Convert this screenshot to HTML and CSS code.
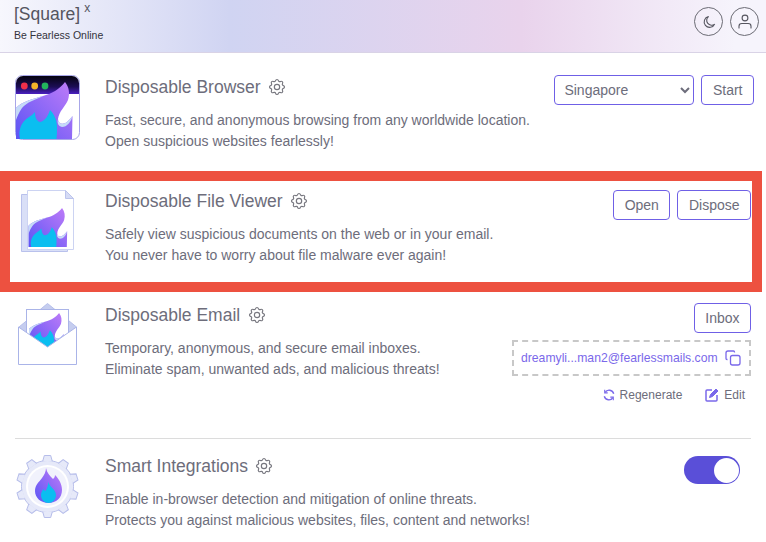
FILE: index.html
```html
<!DOCTYPE html>
<html lang="en">
<head>
<meta charset="utf-8">
<title>Square X</title>
<link rel="stylesheet" href="styles.css">
</head>
<body>
<svg class="defs" width="0" height="0" aria-hidden="true">
  <defs>
    <linearGradient id="flameP" x1="0" y1="1" x2="1" y2="0"><stop offset="0" stop-color="#5b55f5"/><stop offset="1" stop-color="#c07cf8"/></linearGradient>
    <linearGradient id="barG" x1="0" y1="0" x2="0" y2="1"><stop offset="0" stop-color="#05030f"/><stop offset=".6" stop-color="#1c0d55"/><stop offset="1" stop-color="#4a1fc0"/></linearGradient>
    <symbol id="gear" viewBox="0 0 24 24"><path fill="none" stroke="currentColor" stroke-width="1.400" stroke-linejoin="round" d="M10.325 4.317c.426-1.756 2.924-1.756 3.35 0a1.724 1.724 0 0 0 2.573 1.066c1.543-.94 3.31.826 2.37 2.37a1.724 1.724 0 0 0 1.065 2.572c1.756.426 1.756 2.924 0 3.35a1.724 1.724 0 0 0-1.066 2.573c.94 1.543-.826 3.31-2.37 2.37a1.724 1.724 0 0 0-2.572 1.065c-.426 1.756-2.924 1.756-3.35 0a1.724 1.724 0 0 0-2.573-1.066c-1.543.94-3.31-.826-2.37-2.37a1.724 1.724 0 0 0-1.065-2.572c-1.756-.426-1.756-2.924 0-3.35a1.724 1.724 0 0 0 1.066-2.573c-.94-1.543.826-3.31 2.37-2.37c1 .608 2.296.07 2.572-1.065z"/><circle cx="12" cy="12" r="3.200" fill="none" stroke="currentColor" stroke-width="1.400"/></symbol>
    <symbol id="flame" viewBox="1 7 57 57">
      <path d="M1 33C8 26 18 24 28 21C36 19 45 14 50 7C54 12 55 18 53 25C50 32 44 36 43 44C43 49 48 50 52 47C54 45 56 43 57.500 41L57 64H1Z" fill="url(#flameP)"/>
      <path d="M1 33C8 26 18 24 28 21C20 25 12 27 7 33C4 37 2 42 1 45Z" fill="#c5daf8"/>
      <path d="M43 44C43 49 48 50 52 47C54 45 56 43 57.500 41C56 47 52 52 47 52C43 51 42 48 43 44Z" fill="#c5daf8"/>
      <path d="M5 64C3 55 6 47 14 42C16 41 18 39 20 37C20 41 21 46 25 47C30 46 33 41 35 35C39 39 42 45 42 52C42 56 42 60 41.500 64Z" fill="#0bbef0"/>
    </symbol>
    <path id="tooth" d="M27.500 8L29.300 1.500H35.700L37.500 8Z" fill="#e6e9f9" stroke="#b6bdea"/>
  </defs>
</svg>

<header class="topbar">
  <div class="brand">
    <div class="brand-name">[Square]<sup class="brand-x">x</sup></div>
    <div class="brand-tag">Be Fearless Online</div>
  </div>
  <div class="top-actions">
    <button class="round-btn" aria-label="Theme"><svg width="14" height="14" viewBox="0 0 14 14"><path fill="none" stroke="#55555f" stroke-width="1.100" d="M6.500 1.500a5.500 5.500 0 1 0 6.200 7.600 4.700 4.700 0 0 1-6.200-7.600z"/></svg></button>
    <button class="round-btn" aria-label="Account"><svg width="16" height="16" viewBox="0 0 16 16"><circle cx="8" cy="4" r="2.900" fill="none" stroke="#55555f" stroke-width="1.100"/><path fill="none" stroke="#55555f" stroke-width="1.100" stroke-linecap="round" d="M2 14v-1.800c0-1.600 1.300-2.700 2.800-2.700h6.400c1.500 0 2.800 1.100 2.800 2.700V14"/></svg></button>
  </div>
</header>

<main>
  <section class="row row-browser">
    <svg class="ico" width="65" height="65" viewBox="0 0 65 65">
      <rect x=".5" y=".5" width="64" height="64" rx="7" fill="#fff" stroke="#a8a6e8"/>
      <path d="M1 8a7 7 0 0 1 7-7h49a7 7 0 0 1 7 7v11H1z" fill="url(#barG)"/>
      <use href="#flame" x="1" y="7" width="57" height="57"/>
      <circle cx="9.300" cy="11" r="3.400" fill="#f0304a"/><circle cx="19.700" cy="11" r="3.400" fill="#f4b428"/><circle cx="30" cy="11" r="3.400" fill="#23b45c"/>
    </svg>
    <div class="info">
      <h2 class="title">Disposable Browser <svg class="gear"><use href="#gear"/></svg></h2>
      <p class="desc">Fast, secure, and anonymous browsing from any worldwide location.<br>Open suspicious websites fearlessly!</p>
    </div>
    <div class="actions">
      <div class="btn-row">
        <select class="select"><option>Singapore</option></select>
        <button class="btn">Start</button>
      </div>
    </div>
  </section>

  <section class="row row-file">
    <svg class="ico" width="53" height="62" viewBox="0 0 53 62">
      <path d="M.5 4.500h6v55h40v2H.5z" fill="#d9dff7" stroke="#b9c1ec"/>
      <path d="M6.500 .5h38l8 8v51h-46z" fill="#fff" stroke="#ccd3f2"/>
      <path d="M44.500 .5v8h8z" fill="#d5dbf5" stroke="#bcc4ec"/>
      <use href="#flame" x="7" y="18" width="40" height="39"/>
    </svg>
    <div class="info">
      <h2 class="title">Disposable File Viewer <svg class="gear"><use href="#gear"/></svg></h2>
      <p class="desc">Safely view suspicious documents on the web or in your email.<br>You never have to worry about file malware ever again!</p>
    </div>
    <div class="actions">
      <div class="btn-row">
        <button class="btn">Open</button>
        <button class="btn">Dispose</button>
      </div>
    </div>
  </section>

  <section class="row row-email">
    <svg class="ico" width="60" height="62" viewBox="0 0 60 62">
      <path d="M29.500 .5L58.500 24V44H1V24z" fill="#c5cdef" stroke="#b6bfea"/>
      <rect x="8.500" y="6.500" width="42" height="40" fill="#fff" stroke="#aab4e8"/>
      <use href="#flame" x="11" y="10" width="35" height="35"/>
      <path d="M.5 24L29.500 44L58.500 24V61.500H.5z" fill="#fff" stroke="#aab4e8"/>
    </svg>
    <div class="info">
      <h2 class="title">Disposable Email <svg class="gear"><use href="#gear"/></svg></h2>
      <p class="desc">Temporary, anonymous, and secure email inboxes.<br>Eliminate spam, unwanted ads, and malicious threats!</p>
    </div>
    <div class="actions">
      <div class="btn-row"><button class="btn">Inbox</button></div>
      <div class="email-box">
        <span class="email">dreamyli...man2@fearlessmails.com</span>
        <svg width="16" height="16" viewBox="0 0 16 16" fill="none" stroke="#7a68ea" stroke-width="1.300"><rect x="5.500" y="5.500" width="9.500" height="9.500" rx="2"/><path d="M9.500 2.500V2a1 1 0 0 0-1-1H3a2 2 0 0 0-2 2v5.500a1 1 0 0 0 1 1h.5"/></svg>
      </div>
      <div class="links">
        <a class="link"><svg width="12" height="12" viewBox="0 0 14 14" fill="none" stroke="#7a68ea" stroke-width="1.600"><path d="M12.500 5.500A5.500 5.500 0 0 0 2.500 4M1.500 8.500A5.500 5.500 0 0 0 11.500 10"/><path d="M2 1v3.500h3.500M12 13V9.500H8.500" stroke-width="1.300"/></svg>Regenerate</a>
        <a class="link"><svg width="14" height="14" viewBox="0 0 14 14" fill="none" stroke="#7a68ea" stroke-width="1.500"><path d="M7 2H2a1 1 0 0 0-1 1v9a1 1 0 0 0 1 1h9a1 1 0 0 0 1-1V7"/><path d="M4.500 9.500l1-3L11 1l2 2-5.500 5.500z" fill="#7a68ea" stroke-width="1"/></svg>Edit</a>
      </div>
    </div>
  </section>

  <section class="row row-smart">
    <svg class="ico" width="65" height="65" viewBox="0 0 65 65">
      <circle cx="32.500" cy="32.500" r="26" fill="#e6e9f9" stroke="#b6bdea"/>
      <use href="#tooth"/>
      <use href="#tooth" transform="rotate(36 32.500 32.500)"/>
      <use href="#tooth" transform="rotate(72 32.500 32.500)"/>
      <use href="#tooth" transform="rotate(108 32.500 32.500)"/>
      <use href="#tooth" transform="rotate(144 32.500 32.500)"/>
      <use href="#tooth" transform="rotate(180 32.500 32.500)"/>
      <use href="#tooth" transform="rotate(216 32.500 32.500)"/>
      <use href="#tooth" transform="rotate(252 32.500 32.500)"/>
      <use href="#tooth" transform="rotate(288 32.500 32.500)"/>
      <use href="#tooth" transform="rotate(324 32.500 32.500)"/>
      <circle cx="32.500" cy="32.500" r="25.500" fill="#e6e9f9"/>
      <circle cx="32.500" cy="32.500" r="21.500" fill="#fff"/>
      <circle cx="32.500" cy="32.500" r="19.500" fill="#f1f2fc"/>
      <path d="M31 14C32 19 35 22 38 25C39 24 40 23 40 21C44 25 47 30 47 36C47 44 41 49 33.500 49C26 49 20 44 20 37C20 31 24 28 27 24C29 21 31 18 31 14Z" fill="url(#flameP)"/>
      <path d="M33.500 28C34 33 41 35 41 41C41 46 37 49 33.500 49C30 49 26 46 26 41C26 39 27 37 28.500 35C29 36 30 37 30.500 37C32 35 33 31 33.500 28Z" fill="#0bbef0"/>
    </svg>
    <div class="info">
      <h2 class="title">Smart Integrations <svg class="gear"><use href="#gear"/></svg></h2>
      <p class="desc">Enable in-browser detection and mitigation of online threats.<br>Protects you against malicious websites, files, content and networks!</p>
    </div>
    <div class="actions">
      <div class="toggle"><span class="knob"></span></div>
    </div>
  </section>
</main>
</body>
</html>
```
FILE: styles.css
```css
* { box-sizing: border-box; }
html, body { margin: 0; padding: 0; }
body {
  width: 766px;
  height: 542px;
  overflow: hidden;
  background: #fff;
  font-family: "Liberation Sans", Arial, sans-serif;
  color: #6b6b78;
}
.defs { position: absolute; }

.topbar {
  height: 53px;
  display: flex;
  justify-content: space-between;
  align-items: flex-start;
  padding: 0 7px 0 14px;
  border-bottom: 1px solid #d9d3e6;
  background: linear-gradient(90deg, #f7f7fd 0%, #d0d4f2 30%, #e9d3ec 68%, #f6f4fc 96%);
}
.brand { padding-top: 4px; }
.brand-name { font-size: 17.500px; line-height: 20px; color: #55555f; }
.brand-x { font-size: 12px; line-height: 0; margin-left: 4px; vertical-align: 8px; }
.brand-tag { font-size: 10.500px; line-height: 14px; margin-top: 4px; color: #33333c; }
.top-actions { display: flex; gap: 7px; margin-top: 7px; }
.round-btn {
  width: 29px;
  height: 29px;
  border: 1px solid #6b6b74;
  border-radius: 50%;
  background: transparent;
  padding: 0;
  display: flex;
  align-items: center;
  justify-content: center;
}

.row { display: flex; align-items: flex-start; }
.ico { flex: none; display: block; }
.info { flex: 1; min-width: 0; }
.title {
  display: flex;
  align-items: center;
  gap: 6.500px;
  margin: 0;
  font-size: 17.500px;
  font-weight: 400;
  line-height: 22px;
  color: #6d6d7b;
}
.gear { width: 20px; height: 20px; color: #77777f; }
.desc { margin: 11.500px 0 0; font-size: 14px; line-height: 21.500px; color: #6d6d7b; }
.actions { flex: none; display: flex; flex-direction: column; align-items: flex-end; }
.btn-row { display: flex; gap: 7px; }
.btn {
  height: 30px;
  padding: 0 10.500px;
  border: 1px solid #6f60e6;
  border-radius: 4px;
  background: #fff;
  font: 14px "Liberation Sans", Arial, sans-serif;
  color: #6d6d7b;
}
.select {
  width: 140px;
  height: 30px;
  padding: 0 5px;
  border: 1px solid #6f60e6;
  border-radius: 4px;
  background: #fff;
  font: 14px "Liberation Sans", Arial, sans-serif;
  color: #6d6d7b;
}

.row-browser { height: 118px; padding: 22px 12px 0 15px; }
.row-browser .info { padding: 1px 0 0 25px; }

.row-file { height: 121px; margin-right: 4px; border: 10px solid #ed5140; padding: 9px 1px 0 11px; }
.row-file .info { padding: 0 0 0 31px; }

.row-email { height: 147px; padding: 11px 15px 0 18px; position: relative; }
.row-email::after {
  content: "";
  position: absolute;
  left: 15px;
  right: 15px;
  bottom: 0;
  border-bottom: 1px solid #dcdcdc;
}
.row-email .info { padding: 1px 0 0 27px; }
.email-box {
  display: flex;
  align-items: center;
  justify-content: space-between;
  width: 239px;
  height: 36px;
  margin-top: 7px;
  padding: 0 8px 0 7px;
  border: 2px dashed #c8c8c8;
}
.email { font-size: 12.200px; color: #7a68ea; }
.links { display: flex; gap: 23px; margin-top: 12px; padding-right: 6px; }
.link { display: flex; align-items: center; gap: 5px; font-size: 12px; color: #6d6d7b; }

.row-smart { padding: 15px 26px 0 15px; }
.row-smart .info { padding: 1px 0 0 25px; }
.toggle {
  width: 56px;
  height: 28px;
  margin-top: 2px;
  padding: 1.500px;
  border-radius: 14px;
  background: #5a4fd8;
  display: flex;
  justify-content: flex-end;
}
.knob { width: 25px; height: 25px; border-radius: 50%; background: #fff; }
```
